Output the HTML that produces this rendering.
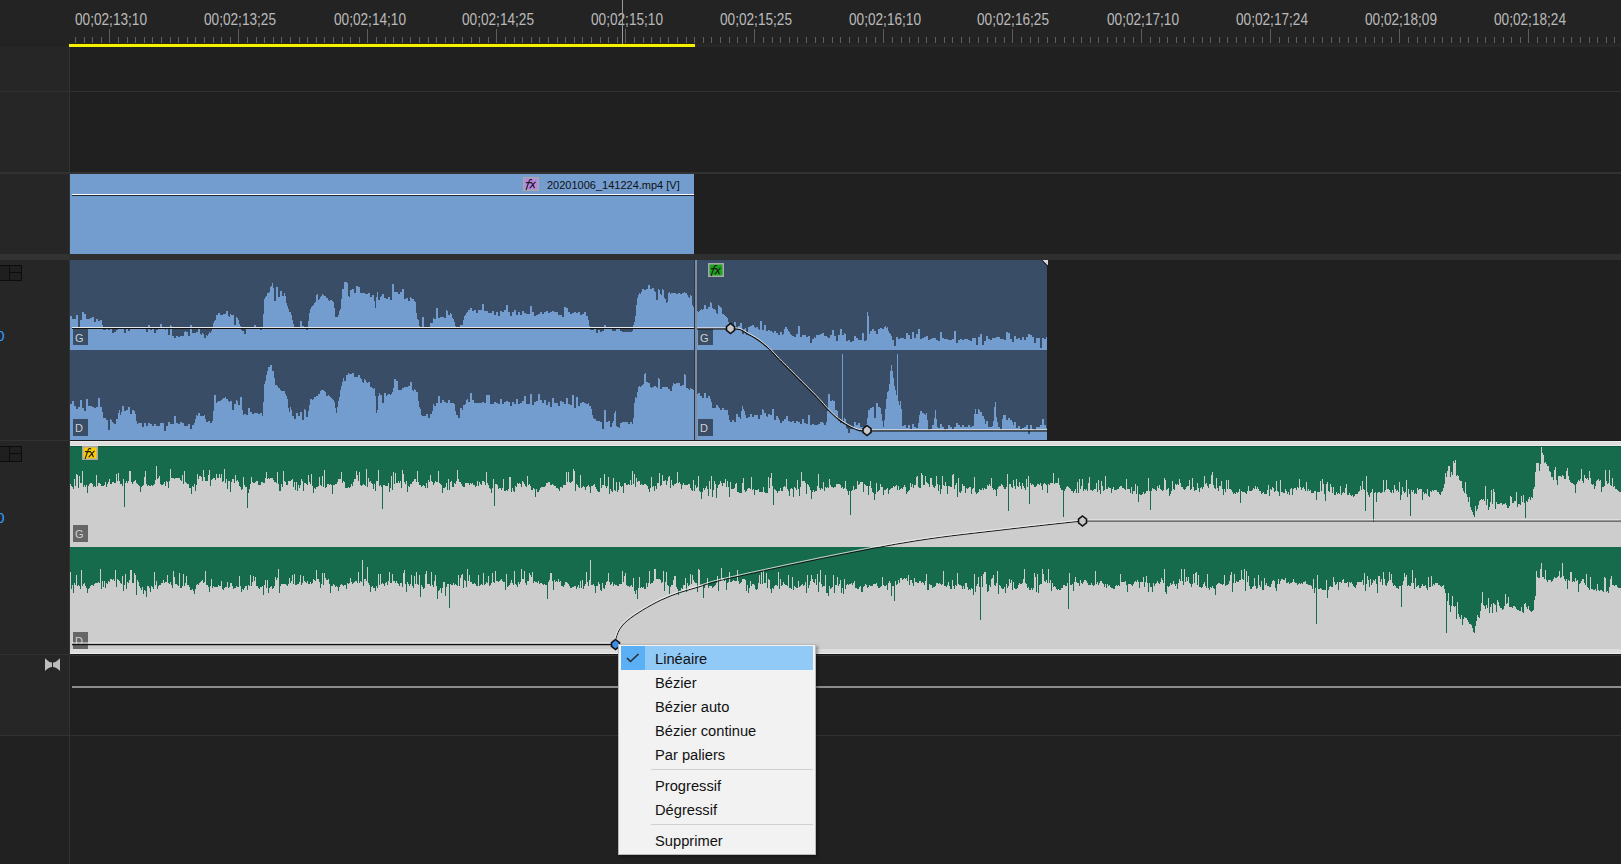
<!DOCTYPE html>
<html><head><meta charset="utf-8"><style>
html,body{margin:0;padding:0;width:1621px;height:864px;overflow:hidden;background:#202020}
body div,body span,body svg{position:absolute}
body *{font-family:"Liberation Sans",sans-serif}
.tc{font-size:16.5px;color:#bababa;white-space:nowrap;line-height:16px;transform:scaleX(0.826);transform-origin:0 0}
.clipname{font-size:11px;color:#111;white-space:nowrap;line-height:13px}
.fx{width:14px;height:13px;border:1px solid #9a9a9a;font-style:italic;font-size:12px;line-height:13px;text-align:center;color:#222}
.lab{font-size:11px;color:#d0d0d0;line-height:17px;padding:1px 0 0 2px;box-sizing:border-box}
.zero{font-size:15.5px;color:#3399ff;line-height:16px}
.mi{font-size:14.7px;color:#111;white-space:nowrap;line-height:17px}
</style></head><body>
<div style="left:0px;top:0px;width:1621px;height:47px;background:#232323;"></div><div style="left:0px;top:47px;width:69px;height:688px;background:#262626;"></div><div style="left:70px;top:47px;width:1551px;height:688px;background:#202020;"></div><div style="left:0px;top:736px;width:1621px;height:128px;background:#212121;"></div><div style="left:69px;top:47px;width:1px;height:817px;background:#323232;"></div><div style="left:0px;top:91px;width:1621px;height:1px;background:#323232;"></div><div style="left:0px;top:172px;width:1621px;height:1px;background:#323232;"></div><div style="left:0px;top:173px;width:1621px;height:1px;background:#323232;"></div><div style="left:0px;top:440px;width:1621px;height:1px;background:#323232;"></div><div style="left:0px;top:654px;width:1621px;height:1px;background:#323232;"></div><div style="left:0px;top:735px;width:1621px;height:1px;background:#323232;"></div><div style="left:0px;top:254px;width:69px;height:6px;background:#333333;"></div><div style="left:69px;top:254px;width:1552px;height:6px;background:#2f2f2f;"></div><svg width="1621" height="47" style="position:absolute;left:0;top:0"><path d="M75.5 37V43 M84.5 37V43 M92.5 37V43 M101.5 37V43 M109.5 29V43 M118.5 37V43 M127.5 37V43 M135.5 37V43 M144.5 37V43 M152.5 37V43 M161.5 37V43 M170.5 37V43 M178.5 37V43 M187.5 37V43 M195.5 37V43 M204.5 37V43 M213.5 37V43 M221.5 37V43 M230.5 37V43 M238.5 29V43 M247.5 37V43 M256.5 37V43 M264.5 37V43 M273.5 37V43 M281.5 37V43 M290.5 37V43 M299.5 37V43 M307.5 37V43 M316.5 37V43 M324.5 37V43 M333.5 37V43 M342.5 37V43 M350.5 37V43 M359.5 37V43 M367.5 29V43 M376.5 37V43 M385.5 37V43 M393.5 37V43 M402.5 37V43 M410.5 37V43 M419.5 37V43 M428.5 37V43 M436.5 37V43 M445.5 37V43 M453.5 37V43 M462.5 37V43 M471.5 37V43 M479.5 37V43 M488.5 37V43 M496.5 29V43 M505.5 37V43 M514.5 37V43 M522.5 37V43 M531.5 37V43 M539.5 37V43 M548.5 37V43 M557.5 37V43 M565.5 37V43 M574.5 37V43 M582.5 37V43 M591.5 37V43 M600.5 37V43 M608.5 37V43 M617.5 37V43 M625.5 29V43 M634.5 37V43 M643.5 37V43 M651.5 37V43 M660.5 37V43 M668.5 37V43 M677.5 37V43 M686.5 37V43 M694.5 37V43 M703.5 37V43 M711.5 37V43 M720.5 37V43 M729.5 37V43 M737.5 37V43 M746.5 37V43 M754.5 29V43 M763.5 37V43 M772.5 37V43 M780.5 37V43 M789.5 37V43 M797.5 37V43 M806.5 37V43 M815.5 37V43 M823.5 37V43 M832.5 37V43 M840.5 37V43 M849.5 37V43 M858.5 37V43 M866.5 37V43 M875.5 37V43 M883.5 29V43 M892.5 37V43 M901.5 37V43 M909.5 37V43 M918.5 37V43 M926.5 37V43 M935.5 37V43 M944.5 37V43 M952.5 37V43 M961.5 37V43 M969.5 37V43 M978.5 37V43 M987.5 37V43 M995.5 37V43 M1004.5 37V43 M1012.5 29V43 M1021.5 37V43 M1030.5 37V43 M1038.5 37V43 M1047.5 37V43 M1055.5 37V43 M1064.5 37V43 M1073.5 37V43 M1081.5 37V43 M1090.5 37V43 M1098.5 37V43 M1107.5 37V43 M1116.5 37V43 M1124.5 37V43 M1133.5 37V43 M1141.5 29V43 M1150.5 37V43 M1159.5 37V43 M1167.5 37V43 M1176.5 37V43 M1184.5 37V43 M1193.5 37V43 M1202.5 37V43 M1210.5 37V43 M1219.5 37V43 M1227.5 37V43 M1236.5 37V43 M1245.5 37V43 M1253.5 37V43 M1262.5 37V43 M1270.5 29V43 M1279.5 37V43 M1288.5 37V43 M1296.5 37V43 M1305.5 37V43 M1313.5 37V43 M1322.5 37V43 M1331.5 37V43 M1339.5 37V43 M1348.5 37V43 M1356.5 37V43 M1365.5 37V43 M1374.5 37V43 M1382.5 37V43 M1391.5 37V43 M1399.5 29V43 M1408.5 37V43 M1417.5 37V43 M1425.5 37V43 M1434.5 37V43 M1442.5 37V43 M1451.5 37V43 M1460.5 37V43 M1468.5 37V43 M1477.5 37V43 M1485.5 37V43 M1494.5 37V43 M1503.5 37V43 M1511.5 37V43 M1520.5 37V43 M1528.5 29V43 M1537.5 37V43 M1546.5 37V43 M1554.5 37V43 M1563.5 37V43 M1571.5 37V43 M1580.5 37V43 M1589.5 37V43 M1597.5 37V43 M1606.5 37V43 M1614.5 37V43" stroke="#5e5e5e" stroke-width="1"/></svg><span class="tc" style="left:75px;top:11px">00;02;13;10</span><span class="tc" style="left:204px;top:11px">00;02;13;25</span><span class="tc" style="left:334px;top:11px">00;02;14;10</span><span class="tc" style="left:462px;top:11px">00;02;14;25</span><span class="tc" style="left:591px;top:11px">00;02;15;10</span><span class="tc" style="left:720px;top:11px">00;02;15;25</span><span class="tc" style="left:849px;top:11px">00;02;16;10</span><span class="tc" style="left:977px;top:11px">00;02;16;25</span><span class="tc" style="left:1107px;top:11px">00;02;17;10</span><span class="tc" style="left:1236px;top:11px">00;02;17;24</span><span class="tc" style="left:1365px;top:11px">00;02;18;09</span><span class="tc" style="left:1494px;top:11px">00;02;18;24</span><div style="left:69px;top:43px;width:626px;height:1px;background:#2a2a10;"></div><div style="left:69px;top:44px;width:626px;height:3px;background:#f5f000;"></div><div style="left:695px;top:44px;width:926px;height:3px;background:#272727;"></div><div style="left:622px;top:0px;width:1px;height:44px;background:#9a9a9a;"></div><div style="left:70px;top:174px;width:624px;height:80px;background:#739ccf;"></div><div style="left:72px;top:194px;width:622px;height:1px;background:#ffffff;"></div><div style="left:72px;top:195px;width:622px;height:1px;background:#1a2a3a;"></div><svg width="16" height="14" style="position:absolute;left:523px;top:177px"><rect x="0.75" y="0.75" width="14.5" height="12.5" fill="#b585e2" stroke="#a8a8a8" stroke-width="1.5"/><path d="M8.8 2.8Q6.6 2.2 6.1 4.2L3.2 12.6M3.4 5.6H8.4M7 10.9L12.2 5.2M8.6 5.9Q10.2 8 11.3 10.8" stroke="#1a1a1a" stroke-width="1.1" fill="none" stroke-linecap="round"/></svg><span class="clipname" style="left:547px;top:179px">20201006_141224.mp4 [V]</span><div style="left:70px;top:260px;width:977px;height:180px;background:#394d66;"></div><div style="left:70px;top:440px;width:1551px;height:1px;background:#1a1a1a;"></div><div style="left:70px;top:441px;width:1551px;height:213px;background:#dddddd;"></div><div style="left:70px;top:441px;width:1551px;height:1px;background:#ebebeb;"></div><div style="left:70px;top:445px;width:1551px;height:1px;background:#e8e6e6;"></div><div style="left:70px;top:653px;width:1551px;height:1px;background:#ececec;"></div><div style="left:70px;top:654px;width:1551px;height:1px;background:#1a1a1a;"></div><div style="left:70px;top:655px;width:1551px;height:1px;background:#333333;"></div><div style="left:70px;top:446px;width:1551px;height:203px;background:#176b4d;"></div><div style="left:70px;top:446px;width:1551px;height:1px;background:#0f5a3c;"></div><svg width="1621" height="864" style="position:absolute;left:0;top:0"><path d="M70 350V316H71V316H72V319H73V319H74V319H75V319H76V315H77V315H78V329H79V329H80V320H81V320H82V312H83V312H84V314H85V314H86V319H87V319H88V319H89V319H90V318H91V318H92V317H93V317H94V322H95V322H96V319H97V319H98V321H99V321H100V320H101V320H102V325H103V330H104V330H105V330H106V329H107V329H108V330H109V330H110V328H111V328H112V333H113V333H114V332H115V332H116V330H117V330H118V329H119V329H120V329H121V328H122V329H123V329H124V333H125V333H126V327H127V327H128V331H129V331H130V329H131V329H132V328H133V328H134V328H135V328H136V328H137V328H138V327H139V327H140V329H141V329H142V329H143V329H144V328H145V328H146V332H147V332H148V325H149V325H150V330H151V330H152V329H153V329H154V333H155V333H156V330H157V330H158V328H159V328H160V324H161V324H162V329H163V329H164V329H165V330H166V329H167V329H168V335H169V335H170V325H171V326H172V336H173V336H174V338H175V338H176V336H177V336H178V337H179V337H180V336H181V336H182V336H183V336H184V332H185V331H186V332H187V332H188V336H189V336H190V325H191V325H192V333H193V333H194V333H195V333H196V332H197V332H198V329H199V329H200V334H201V335H202V333H203V334H204V338H205V338H206V335H207V336H208V334H209V332H210V333H211V331H212V328H213V323H214V321H215V320H216V315H217V315H218V313H219V313H220V315H221V315H222V315H223V314H224V314H225V314H226V311H227V311H228V316H229V317H230V314H231V315H232V315H233V315H234V325H235V325H236V317H237V318H238V320H239V324H240V326H241V330H242V331H243V331H244V334H245V334H246V329H247V329H248V328H249V328H250V327H251V327H252V327H253V327H254V325H255V325H256V328H257V328H258V328H259V328H260V330H261V330H262V328H263V314H264V299H265V297H266V296H267V293H268V293H269V292H270V287H271V286H272V283H273V288H274V301H275V301H276V287H277V287H278V297H279V297H280V291H281V291H282V296H283V296H284V293H285V296H286V303H287V306H288V309H289V312H290V312H291V315H292V320H293V324H294V327H295V329H296V327H297V327H298V329H299V329H300V321H301V321H302V326H303V326H304V328H305V328H306V330H307V330H308V321H309V313H310V309H311V307H312V306H313V305H314V303H315V302H316V295H317V294H318V300H319V299H320V297H321V296H322V294H323V295H324V296H325V296H326V298H327V298H328V300H329V301H330V300H331V300H332V301H333V302H334V308H335V317H336V317H337V317H338V315H339V311H340V309H341V299H342V289H343V289H344V282H345V282H346V282H347V283H348V296H349V297H350V290H351V290H352V289H353V289H354V293H355V293H356V286H357V286H358V287H359V287H360V293H361V293H362V293H363V293H364V293H365V294H366V294H367V294H368V293H369V293H370V297H371V297H372V295H373V295H374V301H375V308H376V297H377V292H378V300H379V300H380V297H381V296H382V294H383V294H384V298H385V298H386V299H387V299H388V297H389V297H390V300H391V300H392V284H393V284H394V292H395V292H396V292H397V292H398V294H399V294H400V292H401V292H402V289H403V289H404V299H405V299H406V298H407V298H408V301H409V301H410V297H411V298H412V299H413V299H414V301H415V302H416V313H417V319H418V320H419V326H420V327H421V328H422V317H423V317H424V328H425V328H426V327H427V327H428V327H429V327H430V323H431V323H432V323H433V318H434V319H435V319H436V308H437V308H438V318H439V318H440V317H441V317H442V317H443V317H444V318H445V318H446V310H447V311H448V315H449V315H450V313H451V314H452V318H453V319H454V322H455V326H456V328H457V328H458V328H459V328H460V325H461V325H462V325H463V320H464V316H465V315H466V313H467V312H468V310H469V310H470V308H471V308H472V311H473V311H474V310H475V310H476V313H477V313H478V310H479V310H480V310H481V310H482V304H483V304H484V311H485V311H486V311H487V311H488V313H489V313H490V313H491V313H492V311H493V311H494V315H495V315H496V312H497V312H498V316H499V316H500V311H501V311H502V312H503V312H504V310H505V310H506V305H507V305H508V312H509V312H510V316H511V316H512V312H513V312H514V310H515V310H516V315H517V315H518V312H519V312H520V315H521V315H522V311H523V311H524V313H525V313H526V314H527V314H528V314H529V314H530V306H531V306H532V312H533V312H534V316H535V316H536V315H537V315H538V314H539V314H540V312H541V312H542V314H543V314H544V312H545V312H546V311H547V311H548V313H549V313H550V312H551V312H552V311H553V311H554V312H555V312H556V312H557V312H558V315H559V315H560V315H561V315H562V317H563V317H564V307H565V307H566V308H567V308H568V312H569V312H570V314H571V314H572V313H573V313H574V312H575V312H576V313H577V313H578V312H579V312H580V315H581V315H582V314H583V314H584V312H585V312H586V316H587V316H588V320H589V326H590V330H591V330H592V330H593V330H594V329H595V329H596V333H597V333H598V330H599V330H600V332H601V332H602V331H603V331H604V325H605V325H606V328H607V328H608V329H609V329H610V329H611V329H612V331H613V331H614V331H615V331H616V329H617V329H618V329H619V329H620V331H621V331H622V332H623V332H624V332H625V332H626V332H627V332H628V332H629V332H630V332H631V332H632V331H633V325H634V322H635V316H636V305H637V298H638V295H639V293H640V294H641V292H642V289H643V289H644V290H645V290H646V289H647V289H648V285H649V285H650V289H651V289H652V288H653V288H654V291H655V292H656V300H657V300H658V289H659V290H660V294H661V295H662V289H663V290H664V298H665V299H666V303H667V302H668V293H669V292H670V294H671V293H672V293H673V293H674V293H675V293H676V294H677V294H678V293H679V293H680V294H681V294H682V293H683V293H684V292H685V293H686V293H687V295H688V297H689V298H690V295H691V296H692V305H693V307H694V304H695V307H696V312H697V311H698V312H699V311H700V310H701V309H702V310H703V309H704V305H705V305H706V309H707V309H708V307H709V307H710V302H711V303H712V308H713V309H714V309H715V310H716V313H717V314H718V305H719V306H720V307H721V308H722V314H723V314H724V315H725V316H726V317H727V318H728V322H729V327H730V327H731V327H732V330H733V330H734V322H735V322H736V328H737V328H738V326H739V326H740V323H741V323H742V334H743V334H744V329H745V328H746V335H747V334H748V327H749V327H750V326H751V326H752V325H753V325H754V327H755V328H756V327H757V327H758V329H759V330H760V321H761V321H762V330H763V330H764V325H765V325H766V331H767V331H768V330H769V330H770V331H771V331H772V332H773V333H774V331H775V331H776V333H777V333H778V335H779V335H780V332H781V332H782V335H783V334H784V329H785V327H786V327H787V329H788V331H789V332H790V334H791V335H792V336H793V336H794V337H795V337H796V334H797V334H798V326H799V326H800V337H801V337H802V335H803V335H804V335H805V335H806V337H807V337H808V336H809V336H810V343H811V343H812V339H813V339H814V337H815V338H816V335H817V335H818V335H819V335H820V334H821V334H822V333H823V333H824V336H825V336H826V336H827V337H828V338H829V338H830V335H831V335H832V330H833V330H834V336H835V336H836V341H837V341H838V335H839V335H840V329H841V329H842V335H843V335H844V333H845V334H846V341H847V341H848V340H849V340H850V342H851V342H852V341H853V341H854V336H855V336H856V338H857V338H858V340H859V340H860V340H861V340H862V333H863V333H864V341H865V341H866V340H867V312H868V316H869V334H870V331H871V331H872V329H873V329H874V331H875V331H876V334H877V334H878V329H879V329H880V328H881V328H882V329H883V329H884V327H885V326H886V328H887V327H888V331H889V333H890V334H891V336H892V340H893V340H894V346H895V346H896V337H897V337H898V339H899V339H900V338H901V338H902V338H903V338H904V339H905V339H906V333H907V333H908V335H909V335H910V339H911V339H912V332H913V332H914V338H915V338H916V334H917V334H918V329H919V329H920V339H921V339H922V338H923V338H924V337H925V337H926V336H927V336H928V340H929V340H930V339H931V339H932V338H933V338H934V338H935V338H936V340H937V340H938V341H939V341H940V332H941V332H942V338H943V338H944V339H945V339H946V339H947V339H948V340H949V340H950V340H951V340H952V339H953V339H954V331H955V331H956V343H957V343H958V340H959V340H960V339H961V339H962V340H963V340H964V339H965V339H966V339H967V339H968V340H969V340H970V341H971V341H972V338H973V338H974V338H975V338H976V345H977V345H978V337H979V337H980V334H981V334H982V345H983V345H984V341H985V341H986V336H987V336H988V339H989V339H990V340H991V340H992V338H993V338H994V338H995V338H996V337H997V337H998V337H999V337H1000V339H1001V339H1002V339H1003V339H1004V340H1005V340H1006V332H1007V332H1008V333H1009V333H1010V339H1011V339H1012V342H1013V342H1014V336H1015V336H1016V339H1017V339H1018V338H1019V338H1020V340H1021V340H1022V337H1023V337H1024V340H1025V340H1026V337H1027V337H1028V334H1029V334H1030V335H1031V335H1032V337H1033V337H1034V343H1035V343H1036V338H1037V338H1038V338H1039V338H1040V348H1041V348H1042V338H1043V338H1044V339H1045V339H1046V337H1047V350Z" fill="#739ccf"/><path d="M70 440V404H71V404H72V401H73V401H74V406H75V406H76V409H77V409H78V407H79V407H80V400H81V400H82V408H83V408H84V411H85V411H86V399H87V399H88V406H89V406H90V406H91V406H92V407H93V407H94V408H95V408H96V407H97V407H98V398H99V398H100V407H101V407H102V412H103V418H104V418H105V418H106V420H107V420H108V430H109V430H110V419H111V420H112V422H113V423H114V424H115V424H116V419H117V419H118V413H119V410H120V415H121V412H122V406H123V406H124V411H125V411H126V410H127V410H128V407H129V407H130V414H131V414H132V410H133V410H134V411H135V414H136V421H137V424H138V423H139V423H140V423H141V423H142V427H143V427H144V423H145V423H146V426H147V426H148V423H149V423H150V424H151V424H152V426H153V426H154V424H155V424H156V426H157V426H158V426H159V426H160V423H161V423H162V423H163V423H164V431H165V431H166V426H167V426H168V422H169V422H170V424H171V424H172V424H173V424H174V416H175V416H176V423H177V423H178V424H179V424H180V422H181V422H182V423H183V423H184V426H185V426H186V426H187V426H188V424H189V424H190V429H191V429H192V425H193V425H194V423H195V419H196V415H197V416H198V413H199V413H200V416H201V416H202V416H203V416H204V415H205V419H206V422H207V422H208V421H209V421H210V423H211V423H212V421H213V411H214V395H215V395H216V403H217V402H218V401H219V401H220V401H221V400H222V399H223V398H224V398H225V397H226V399H227V399H228V401H229V402H230V401H231V401H232V410H233V410H234V404H235V404H236V400H237V401H238V405H239V405H240V397H241V397H242V410H243V415H244V414H245V414H246V415H247V415H248V408H249V408H250V412H251V412H252V414H253V414H254V413H255V413H256V413H257V413H258V414H259V414H260V413H261V413H262V416H263V402H264V384H265V381H266V375H267V371H268V367H269V367H270V365H271V365H272V371H273V371H274V378H275V385H276V385H277V386H278V388H279V388H280V390H281V391H282V391H283V391H284V391H285V394H286V396H287V399H288V408H289V412H290V407H291V410H292V416H293V416H294V419H295V419H296V413H297V413H298V416H299V416H300V412H301V412H302V420H303V420H304V409H305V410H306V417H307V417H308V411H309V405H310V399H311V399H312V400H313V399H314V397H315V397H316V396H317V396H318V394H319V394H320V391H321V390H322V390H323V390H324V391H325V392H326V396H327V396H328V395H329V396H330V397H331V398H332V399H333V400H334V402H335V408H336V413H337V407H338V401H339V397H340V390H341V386H342V382H343V378H344V381H345V381H346V375H347V375H348V373H349V374H350V374H351V374H352V373H353V373H354V377H355V377H356V377H357V377H358V375H359V375H360V378H361V379H362V382H363V383H364V379H365V380H366V382H367V383H368V382H369V382H370V387H371V387H372V388H373V389H374V388H375V396H376V413H377V410H378V396H379V393H380V395H381V395H382V403H383V403H384V393H385V393H386V396H387V395H388V394H389V394H390V395H391V394H392V392H393V388H394V379H395V379H396V381H397V381H398V390H399V390H400V390H401V390H402V388H403V388H404V387H405V387H406V387H407V387H408V386H409V386H410V382H411V382H412V390H413V391H414V389H415V390H416V392H417V392H418V401H419V407H420V409H421V415H422V416H423V416H424V416H425V416H426V414H427V414H428V418H429V418H430V414H431V414H432V411H433V404H434V406H435V406H436V403H437V403H438V396H439V396H440V403H441V403H442V400H443V400H444V402H445V402H446V403H447V403H448V400H449V400H450V403H451V403H452V403H453V403H454V404H455V411H456V415H457V415H458V418H459V418H460V408H461V408H462V410H463V405H464V405H465V404H466V400H467V399H468V402H469V402H470V393H471V393H472V400H473V400H474V403H475V403H476V403H477V403H478V403H479V403H480V403H481V403H482V402H483V402H484V403H485V403H486V395H487V395H488V395H489V395H490V404H491V404H492V404H493V404H494V402H495V402H496V403H497V403H498V404H499V404H500V399H501V399H502V404H503V404H504V402H505V402H506V401H507V401H508V402H509V402H510V406H511V406H512V402H513V402H514V404H515V404H516V399H517V399H518V404H519V404H520V403H521V403H522V401H523V401H524V396H525V396H526V404H527V404H528V404H529V404H530V394H531V394H532V405H533V405H534V402H535V402H536V401H537V401H538V394H539V394H540V400H541V400H542V403H543V403H544V400H545V400H546V405H547V405H548V402H549V402H550V407H551V407H552V398H553V398H554V403H555V403H556V403H557V403H558V406H559V406H560V401H561V401H562V402H563V402H564V404H565V404H566V398H567V398H568V404H569V404H570V405H571V405H572V395H573V395H574V408H575V408H576V397H577V397H578V406H579V406H580V403H581V403H582V402H583V402H584V403H585V403H586V404H587V404H588V403H589V406H590V406H591V409H592V415H593V418H594V419H595V419H596V421H597V421H598V421H599V421H600V422H601V422H602V429H603V429H604V410H605V410H606V422H607V422H608V421H609V421H610V427H611V427H612V423H613V421H614V413H615V411H616V426H617V427H618V427H619V428H620V423H621V423H622V422H623V422H624V422H625V422H626V422H627V422H628V424H629V424H630V422H631V422H632V424H633V418H634V403H635V397H636V398H637V392H638V387H639V386H640V387H641V386H642V385H643V384H644V374H645V373H646V382H647V382H648V383H649V383H650V387H651V388H652V387H653V387H654V386H655V386H656V387H657V388H658V378H659V379H660V389H661V389H662V387H663V387H664V387H665V387H666V387H667V387H668V389H669V389H670V391H671V391H672V386H673V383H674V384H675V384H676V383H677V383H678V383H679V383H680V386H681V386H682V385H683V385H684V374H685V375H686V388H687V388H688V389H689V390H690V388H691V389H692V389H693V390H694V391H695V393H696V393H697V394H698V393H699V393H700V396H701V396H702V398H703V398H704V393H705V393H706V398H707V398H708V396H709V396H710V399H711V402H712V408H713V408H714V408H715V408H716V405H717V405H718V407H719V408H720V410H721V410H722V408H723V408H724V410H725V410H726V410H727V410H728V415H729V420H730V422H731V422H732V420H733V420H734V422H735V422H736V414H737V414H738V417H739V417H740V419H741V411H742V406H743V409H744V411H745V415H746V418H747V418H748V417H749V417H750V414H751V414H752V417H753V417H754V415H755V415H756V415H757V415H758V419H759V419H760V415H761V415H762V409H763V410H764V413H765V413H766V416H767V417H768V414H769V414H770V415H771V415H772V409H773V409H774V420H775V420H776V416H777V416H778V418H779V420H780V423H781V423H782V421H783V421H784V419H785V419H786V416H787V416H788V421H789V421H790V422H791V422H792V421H793V421H794V423H795V423H796V421H797V421H798V422H799V422H800V424H801V424H802V419H803V419H804V423H805V423H806V424H807V424H808V415H809V415H810V425H811V425H812V424H813V424H814V425H815V425H816V425H817V425H818V424H819V424H820V422H821V422H822V422H823V423H824V425H825V425H826V422H827V411H828V394H829V394H830V401H831V401H832V400H833V401H834V401H835V410H836V410H837V411H838V421H839V421H840V423H841V423H842V354H843V424H844V418H845V419H846V428H847V429H848V433H849V433H850V429H851V429H852V429H853V429H854V422H855V422H856V425H857V425H858V423H859V423H860V427H861V427H862V427H863V427H864V434H865V434H866V424H867V418H868V410H869V410H870V408H871V408H872V407H873V407H874V418H875V418H876V403H877V403H878V407H879V407H880V408H881V414H882V421H883V427H884V420H885V409H886V399H887V392H888V391H889V384H890V371H891V365H892V371H893V378H894V386H895V390H896V395H897V354H898V401H899V405H900V401H901V409H902V426H903V426H904V425H905V425H906V428H907V428H908V425H909V425H910V429H911V429H912V424H913V424H914V427H915V427H916V428H917V428H918V423H919V415H920V411H921V411H922V413H923V413H924V414H925V415H926V413H927V420H928V430H929V430H930V429H931V429H932V425H933V425H934V418H935V410H936V419H937V427H938V428H939V428H940V424H941V424H942V427H943V427H944V430H945V430H946V429H947V429H948V425H949V425H950V427H951V427H952V429H953V429H954V427H955V427H956V423H957V423H958V425H959V425H960V427H961V427H962V425H963V425H964V427H965V427H966V427H967V427H968V425H969V425H970V427H971V427H972V426H973V426H974V414H975V409H976V414H977V414H978V409H979V410H980V412H981V412H982V416H983V416H984V419H985V424H986V421H987V421H988V427H989V427H990V427H991V427H992V426H993V421H994V407H995V402H996V417H997V422H998V427H999V427H1000V429H1001V429H1002V419H1003V415H1004V415H1005V415H1006V420H1007V420H1008V418H1009V418H1010V420H1011V420H1012V422H1013V425H1014V422H1015V422H1016V428H1017V428H1018V426H1019V426H1020V429H1021V429H1022V428H1023V428H1024V427H1025V427H1026V425H1027V425H1028V434H1029V434H1030V425H1031V425H1032V429H1033V429H1034V430H1035V430H1036V427H1037V427H1038V427H1039V427H1040V425H1041V425H1042V419H1043V419H1044V425H1045V425H1046V428H1047V440Z" fill="#739ccf"/><rect x="694" y="260" width="1" height="180" fill="#2a3545"/><rect x="695" y="260" width="2" height="180" fill="#7f8ea2"/><path d="M70 547V484H71V486H72V487H73V489H74V479H75V486H76V474H77V475H78V488H79V476H80V483H81V483H82V471H83V487H84V485H85V487H86V485H87V493H88V486H89V484H90V483H91V483H92V484H93V487H94V486H95V487H96V475H97V486H98V483H99V483H100V484H101V486H102V486H103V486H104V485H105V482H106V487H107V484H108V482H109V479H110V484H111V484H112V482H113V482H114V483H115V483H116V474H117V481H118V473H119V481H120V484H121V484H122V486H123V479H124V507H125V483H126V481H127V483H128V481H129V471H130V471H131V482H132V484H133V482H134V481H135V480H136V483H137V484H138V485H139V486H140V492H141V487H142V486H143V485H144V477H145V471H146V484H147V486H148V485H149V486H150V486H151V485H152V486H153V485H154V484H155V480H156V466H157V479H158V478H159V476H160V484H161V485H162V485H163V484H164V482H165V486H166V481H167V482H168V488H169V481H170V469H171V478H172V478H173V478H174V479H175V478H176V478H177V478H178V478H179V478H180V480H181V481H182V475H183V484H184V471H185V482H186V483H187V484H188V484H189V488H190V488H191V494H192V486H193V487H194V484H195V491H196V485H197V474H198V479H199V476H200V476H201V477H202V481H203V470H204V477H205V481H206V481H207V481H208V475H209V470H210V486H211V480H212V479H213V478H214V478H215V480H216V474H217V478H218V478H219V474H220V478H221V474H222V482H223V481H224V469H225V483H226V479H227V489H228V481H229V481H230V492H231V482H232V479H233V479H234V483H235V475H236V481H237V480H238V482H239V486H240V487H241V490H242V489H243V477H244V485H245V487H246V487H247V508H248V493H249V489H250V484H251V477H252V482H253V483H254V483H255V482H256V481H257V481H258V485H259V485H260V485H261V482H262V482H263V483H264V483H265V478H266V472H267V479H268V478H269V479H270V478H271V478H272V478H273V480H274V482H275V482H276V483H277V472H278V484H279V491H280V491H281V484H282V487H283V471H284V481H285V482H286V485H287V485H288V481H289V481H290V481H291V480H292V479H293V487H294V482H295V490H296V482H297V491H298V485H299V488H300V485H301V479H302V481H303V491H304V483H305V483H306V484H307V485H308V475H309V482H310V484H311V474H312V486H313V493H314V488H315V489H316V487H317V487H318V486H319V477H320V485H321V486H322V476H323V487H324V470H325V488H326V487H327V484H328V484H329V485H330V484H331V485H332V494H333V485H334V485H335V484H336V484H337V482H338V479H339V479H340V479H341V472H342V483H343V481H344V482H345V488H346V488H347V488H348V487H349V488H350V487H351V484H352V486H353V482H354V479H355V479H356V471H357V475H358V481H359V472H360V485H361V486H362V485H363V484H364V485H365V486H366V469H367V487H368V478H369V482H370V481H371V483H372V484H373V489H374V484H375V491H376V481H377V481H378V470H379V486H380V485H381V487H382V509H383V485H384V485H385V486H386V486H387V486H388V483H389V492H390V488H391V476H392V490H393V472H394V484H395V473H396V483H397V483H398V481H399V483H400V481H401V488H402V470H403V474H404V482H405V484H406V481H407V492H408V486H409V487H410V484H411V484H412V482H413V481H414V479H415V479H416V482H417V471H418V482H419V485H420V485H421V487H422V486H423V485H424V486H425V488H426V483H427V488H428V480H429V482H430V475H431V481H432V482H433V485H434V483H435V481H436V482H437V482H438V471H439V483H440V484H441V485H442V493H443V488H444V488H445V487H446V483H447V490H448V479H449V490H450V482H451V481H452V487H453V487H454V483H455V484H456V481H457V470H458V479H459V482H460V482H461V484H462V486H463V487H464V487H465V483H466V483H467V483H468V483H469V485H470V483H471V484H472V483H473V485H474V485H475V487H476V486H477V481H478V486H479V482H480V484H481V485H482V481H483V481H484V482H485V485H486V472H487V483H488V485H489V488H490V489H491V493H492V488H493V479H494V506H495V484H496V484H497V485H498V489H499V488H500V488H501V490H502V488H503V479H504V491H505V491H506V490H507V491H508V489H509V477H510V477H511V492H512V488H513V491H514V492H515V486H516V487H517V483H518V484H519V483H520V484H521V487H522V481H523V482H524V484H525V486H526V487H527V476H528V485H529V484H530V486H531V490H532V490H533V488H534V489H535V497H536V489H537V492H538V492H539V490H540V488H541V487H542V487H543V487H544V487H545V486H546V483H547V483H548V482H549V482H550V485H551V485H552V484H553V485H554V486H555V486H556V488H557V488H558V489H559V491H560V487H561V487H562V488H563V485H564V485H565V485H566V472H567V482H568V472H569V482H570V483H571V482H572V481H573V469H574V471H575V491H576V484H577V485H578V487H579V488H580V475H581V488H582V487H583V486H584V487H585V490H586V487H587V486H588V485H589V487H590V493H591V486H592V486H593V485H594V484H595V487H596V489H597V491H598V492H599V492H600V478H601V488H602V485H603V485H604V474H605V486H606V488H607V486H608V477H609V494H610V489H611V491H612V492H613V478H614V490H615V491H616V482H617V492H618V490H619V482H620V486H621V487H622V486H623V493H624V483H625V483H626V485H627V485H628V484H629V485H630V480H631V485H632V471H633V484H634V474H635V487H636V478H637V482H638V481H639V481H640V485H641V484H642V485H643V485H644V484H645V484H646V485H647V486H648V489H649V492H650V488H651V477H652V487H653V486H654V491H655V486H656V489H657V483H658V483H659V473H660V486H661V485H662V475H663V481H664V481H665V480H666V485H667V481H668V477H669V476H670V488H671V480H672V485H673V486H674V484H675V484H676V483H677V472H678V483H679V482H680V484H681V489H682V485H683V483H684V485H685V485H686V485H687V485H688V484H689V484H690V488H691V490H692V491H693V480H694V491H695V485H696V488H697V487H698V476H699V491H700V492H701V499H702V492H703V488H704V490H705V488H706V486H707V489H708V496H709V481H710V489H711V476H712V497H713V490H714V481H715V484H716V498H717V488H718V485H719V484H720V481H721V483H722V486H723V483H724V483H725V479H726V487H727V481H728V487H729V497H730V482H731V489H732V489H733V489H734V488H735V484H736V483H737V492H738V492H739V493H740V493H741V493H742V483H743V478H744V490H745V492H746V491H747V489H748V488H749V488H750V489H751V477H752V490H753V489H754V495H755V490H756V490H757V490H758V489H759V492H760V492H761V492H762V492H763V487H764V492H765V493H766V493H767V493H768V477H769V488H770V478H771V473H772V486H773V505H774V489H775V490H776V491H777V493H778V491H779V491H780V488H781V491H782V491H783V487H784V486H785V487H786V479H787V489H788V491H789V496H790V489H791V488H792V489H793V497H794V487H795V488H796V490H797V480H798V489H799V496H800V487H801V472H802V481H803V481H804V481H805V483H806V494H807V484H808V485H809V487H810V490H811V499H812V492H813V490H814V492H815V491H816V491H817V486H818V474H819V488H820V490H821V488H822V489H823V482H824V491H825V487H826V488H827V487H828V488H829V479H830V485H831V487H832V487H833V488H834V487H835V487H836V484H837V484H838V484H839V484H840V485H841V488H842V487H843V489H844V488H845V481H846V489H847V491H848V495H849V491H850V515H851V491H852V490H853V486H854V490H855V489H856V489H857V481H858V485H859V484H860V482H861V482H862V482H863V492H864V484H865V485H866V486H867V486H868V495H869V486H870V481H871V488H872V492H873V493H874V500H875V494H876V483H877V492H878V491H879V490H880V484H881V487H882V487H883V495H884V490H885V490H886V489H887V488H888V494H889V490H890V489H891V488H892V488H893V486H894V487H895V486H896V485H897V490H898V486H899V490H900V489H901V488H902V489H903V487H904V485H905V487H906V494H907V492H908V491H909V490H910V483H911V487H912V484H913V488H914V485H915V485H916V477H917V476H918V487H919V488H920V488H921V473H922V475H923V485H924V485H925V476H926V482H927V483H928V484H929V487H930V478H931V478H932V485H933V487H934V488H935V486H936V476H937V484H938V491H939V485H940V494H941V489H942V476H943V485H944V486H945V482H946V486H947V494H948V486H949V486H950V487H951V487H952V475H953V474H954V489H955V485H956V483H957V497H958V478H959V492H960V493H961V491H962V484H963V486H964V486H965V493H966V488H967V489H968V488H969V487H970V487H971V494H972V489H973V488H974V477H975V492H976V494H977V493H978V492H979V489H980V490H981V490H982V488H983V490H984V488H985V489H986V489H987V485H988V486H989V484H990V486H991V478H992V488H993V490H994V489H995V490H996V496H997V489H998V487H999V486H1000V486H1001V484H1002V485H1003V487H1004V489H1005V489H1006V487H1007V474H1008V511H1009V484H1010V484H1011V487H1012V488H1013V480H1014V486H1015V489H1016V479H1017V486H1018V487H1019V482H1020V486H1021V489H1022V483H1023V486H1024V488H1025V490H1026V479H1027V487H1028V476H1029V504H1030V483H1031V485H1032V484H1033V485H1034V487H1035V487H1036V486H1037V484H1038V484H1039V485H1040V483H1041V486H1042V490H1043V484H1044V483H1045V484H1046V485H1047V493H1048V484H1049V485H1050V483H1051V483H1052V483H1053V473H1054V484H1055V483H1056V483H1057V483H1058V478H1059V485H1060V488H1061V490H1062V490H1063V517H1064V491H1065V489H1066V487H1067V486H1068V487H1069V488H1070V489H1071V491H1072V491H1073V493H1074V491H1075V489H1076V493H1077V482H1078V493H1079V479H1080V489H1081V486H1082V479H1083V491H1084V489H1085V490H1086V489H1087V491H1088V483H1089V477H1090V490H1091V490H1092V491H1093V490H1094V489H1095V489H1096V483H1097V492H1098V480H1099V490H1100V494H1101V481H1102V486H1103V491H1104V490H1105V476H1106V489H1107V489H1108V487H1109V488H1110V488H1111V493H1112V489H1113V487H1114V490H1115V490H1116V490H1117V489H1118V489H1119V487H1120V486H1121V486H1122V488H1123V488H1124V489H1125V490H1126V479H1127V489H1128V489H1129V489H1130V493H1131V487H1132V494H1133V491H1134V491H1135V484H1136V494H1137V486H1138V502H1139V494H1140V495H1141V495H1142V494H1143V492H1144V494H1145V493H1146V491H1147V491H1148V478H1149V491H1150V510H1151V491H1152V488H1153V489H1154V489H1155V490H1156V491H1157V486H1158V488H1159V485H1160V489H1161V490H1162V491H1163V490H1164V478H1165V480H1166V490H1167V489H1168V488H1169V496H1170V494H1171V491H1172V481H1173V489H1174V490H1175V484H1176V485H1177V484H1178V485H1179V479H1180V483H1181V487H1182V487H1183V489H1184V490H1185V489H1186V487H1187V486H1188V486H1189V480H1190V490H1191V489H1192V478H1193V487H1194V491H1195V490H1196V490H1197V483H1198V488H1199V492H1200V488H1201V487H1202V489H1203V487H1204V476H1205V484H1206V483H1207V486H1208V488H1209V484H1210V484H1211V475H1212V472H1213V485H1214V488H1215V489H1216V478H1217V488H1218V491H1219V486H1220V486H1221V481H1222V489H1223V495H1224V489H1225V492H1226V480H1227V489H1228V480H1229V489H1230V489H1231V490H1232V492H1233V494H1234V493H1235V494H1236V492H1237V493H1238V492H1239V489H1240V503H1241V491H1242V492H1243V492H1244V492H1245V493H1246V494H1247V491H1248V486H1249V491H1250V491H1251V491H1252V490H1253V488H1254V489H1255V486H1256V489H1257V487H1258V489H1259V491H1260V491H1261V494H1262V493H1263V492H1264V494H1265V494H1266V494H1267V490H1268V485H1269V496H1270V489H1271V490H1272V487H1273V488H1274V492H1275V491H1276V481H1277V491H1278V492H1279V496H1280V480H1281V492H1282V492H1283V493H1284V493H1285V489H1286V491H1287V494H1288V492H1289V495H1290V489H1291V488H1292V495H1293V489H1294V488H1295V488H1296V490H1297V487H1298V488H1299V479H1300V487H1301V490H1302V488H1303V487H1304V489H1305V491H1306V482H1307V491H1308V489H1309V491H1310V490H1311V493H1312V493H1313V493H1314V491H1315V491H1316V500H1317V492H1318V492H1319V492H1320V481H1321V491H1322V479H1323V484H1324V494H1325V501H1326V484H1327V482H1328V491H1329V492H1330V484H1331V487H1332V493H1333V487H1334V495H1335V495H1336V492H1337V494H1338V493H1339V494H1340V486H1341V495H1342V493H1343V492H1344V493H1345V488H1346V484H1347V495H1348V495H1349V493H1350V495H1351V496H1352V495H1353V497H1354V496H1355V494H1356V494H1357V494H1358V492H1359V491H1360V486H1361V490H1362V481H1363V489H1364V490H1365V511H1366V476H1367V492H1368V495H1369V497H1370V493H1371V492H1372V489H1373V522H1374V493H1375V492H1376V502H1377V493H1378V492H1379V492H1380V493H1381V493H1382V492H1383V480H1384V492H1385V490H1386V480H1387V489H1388V489H1389V490H1390V492H1391V493H1392V490H1393V493H1394V485H1395V489H1396V491H1397V490H1398V492H1399V482H1400V500H1401V495H1402V487H1403V491H1404V493H1405V492H1406V480H1407V497H1408V489H1409V494H1410V516H1411V490H1412V492H1413V490H1414V494H1415V493H1416V494H1417V488H1418V490H1419V489H1420V489H1421V489H1422V500H1423V492H1424V494H1425V493H1426V494H1427V489H1428V496H1429V497H1430V491H1431V492H1432V490H1433V491H1434V490H1435V490H1436V490H1437V492H1438V492H1439V494H1440V495H1441V492H1442V491H1443V488H1444V484H1445V473H1446V477H1447V471H1448V466H1449V466H1450V477H1451V472H1452V475H1453V461H1454V463H1455V460H1456V476H1457V475H1458V476H1459V480H1460V481H1461V481H1462V488H1463V491H1464V493H1465V482H1466V494H1467V497H1468V502H1469V497H1470V507H1471V510H1472V512H1473V515H1474V517H1475V506H1476V511H1477V509H1478V505H1479V501H1480V500H1481V499H1482V500H1483V499H1484V501H1485V486H1486V505H1487V499H1488V510H1489V507H1490V502H1491V490H1492V504H1493V489H1494V492H1495V509H1496V502H1497V504H1498V504H1499V504H1500V503H1501V503H1502V505H1503V504H1504V504H1505V503H1506V505H1507V508H1508V508H1509V506H1510V496H1511V497H1512V503H1513V503H1514V501H1515V501H1516V492H1517V507H1518V504H1519V504H1520V505H1521V496H1522V502H1523V495H1524V503H1525V518H1526V501H1527V502H1528V499H1529V497H1530V500H1531V497H1532V498H1533V489H1534V487H1535V472H1536V463H1537V463H1538V463H1539V471H1540V464H1541V447H1542V453H1543V455H1544V463H1545V462H1546V464H1547V466H1548V466H1549V471H1550V472H1551V477H1552V477H1553V480H1554V470H1555V467H1556V480H1557V485H1558V476H1559V476H1560V476H1561V477H1562V475H1563V476H1564V479H1565V479H1566V471H1567V468H1568V476H1569V480H1570V482H1571V483H1572V483H1573V484H1574V485H1575V493H1576V484H1577V482H1578V480H1579V481H1580V479H1581V469H1582V481H1583V483H1584V475H1585V478H1586V479H1587V478H1588V480H1589V471H1590V478H1591V484H1592V485H1593V484H1594V489H1595V486H1596V481H1597V480H1598V479H1599V481H1600V480H1601V492H1602V487H1603V487H1604V486H1605V470H1606V481H1607V484H1608V483H1609V470H1610V485H1611V486H1612V478H1613V487H1614V486H1615V489H1616V489H1617V490H1618V491H1619V492H1620V492H1621V547Z" fill="#cdcdcd"/><path d="M70 649V572H71V589H72V585H73V593H74V583H75V585H76V575H77V586H78V585H79V586H80V589H81V570H82V586H83V584H84V583H85V586H86V588H87V593H88V589H89V588H90V586H91V585H92V585H93V586H94V584H95V583H96V583H97V583H98V582H99V583H100V569H101V589H102V581H103V587H104V581H105V588H106V583H107V584H108V581H109V582H110V579H111V579H112V580H113V579H114V581H115V570H116V587H117V579H118V580H119V581H120V583H121V584H122V576H123V591H124V585H125V574H126V589H127V582H128V583H129V580H130V570H131V570H132V583H133V583H134V573H135V575H136V595H137V580H138V582H139V586H140V588H141V590H142V587H143V594H144V590H145V591H146V597H147V586H148V586H149V588H150V592H151V586H152V587H153V589H154V572H155V585H156V581H157V589H158V586H159V585H160V585H161V583H162V583H163V580H164V583H165V582H166V582H167V575H168V583H169V584H170V582H171V585H172V588H173V571H174V577H175V584H176V584H177V585H178V586H179V573H180V588H181V588H182V586H183V574H184V586H185V583H186V576H187V585H188V585H189V587H190V590H191V590H192V589H193V591H194V594H195V589H196V585H197V584H198V585H199V583H200V582H201V581H202V580H203V583H204V582H205V571H206V585H207V585H208V587H209V592H210V586H211V579H212V588H213V586H214V587H215V587H216V587H217V587H218V585H219V586H220V586H221V581H222V589H223V590H224V588H225V587H226V587H227V582H228V588H229V587H230V583H231V583H232V586H233V589H234V588H235V588H236V586H237V587H238V587H239V576H240V586H241V592H242V589H243V590H244V588H245V586H246V586H247V590H248V585H249V586H250V575H251V586H252V582H253V576H254V581H255V577H256V586H257V586H258V588H259V589H260V587H261V587H262V586H263V595H264V585H265V580H266V588H267V580H268V593H269V588H270V587H271V586H272V589H273V588H274V586H275V577H276V580H277V578H278V569H279V593H280V586H281V584H282V584H283V584H284V584H285V584H286V585H287V586H288V584H289V578H290V583H291V581H292V575H293V584H294V574H295V585H296V585H297V584H298V584H299V582H300V575H301V585H302V583H303V576H304V581H305V582H306V583H307V581H308V584H309V584H310V582H311V584H312V583H313V579H314V580H315V581H316V570H317V579H318V579H319V582H320V588H321V584H322V573H323V585H324V573H325V578H326V580H327V580H328V579H329V584H330V593H331V586H332V586H333V584H334V585H335V587H336V586H337V587H338V591H339V587H340V585H341V584H342V585H343V586H344V585H345V585H346V589H347V583H348V584H349V583H350V578H351V582H352V584H353V583H354V582H355V581H356V581H357V583H358V572H359V583H360V581H361V582H362V560H363V586H364V579H365V579H366V581H367V567H368V583H369V585H370V592H371V587H372V586H373V588H374V588H375V591H376V586H377V588H378V574H379V585H380V574H381V584H382V583H383V584H384V586H385V583H386V582H387V585H388V581H389V572H390V583H391V583H392V574H393V581H394V581H395V583H396V581H397V583H398V584H399V586H400V583H401V583H402V587H403V573H404V570H405V584H406V592H407V582H408V584H409V586H410V584H411V575H412V586H413V588H414V576H415V584H416V572H417V584H418V585H419V575H420V597H421V585H422V587H423V589H424V588H425V574H426V571H427V584H428V584H429V584H430V586H431V572H432V585H433V587H434V581H435V575H436V586H437V599H438V591H439V590H440V588H441V593H442V588H443V582H444V582H445V596H446V587H447V584H448V584H449V608H450V584H451V585H452V585H453V583H454V585H455V584H456V585H457V586H458V575H459V586H460V578H461V575H462V574H463V588H464V580H465V581H466V587H467V569H468V581H469V575H470V582H471V582H472V584H473V584H474V583H475V584H476V586H477V586H478V575H479V586H480V585H481V584H482V585H483V573H484V585H485V584H486V582H487V583H488V576H489V586H490V585H491V583H492V573H493V582H494V583H495V571H496V581H497V581H498V582H499V581H500V580H501V579H502V581H503V582H504V582H505V590H506V574H507V587H508V586H509V585H510V583H511V580H512V583H513V585H514V571H515V584H516V585H517V587H518V582H519V584H520V582H521V569H522V579H523V579H524V571H525V583H526V585H527V581H528V581H529V573H530V575H531V577H532V572H533V583H534V581H535V582H536V582H537V583H538V581H539V584H540V583H541V583H542V584H543V585H544V584H545V585H546V585H547V599H548V582H549V580H550V573H551V573H552V581H553V590H554V580H555V582H556V581H557V582H558V579H559V582H560V581H561V586H562V586H563V587H564V585H565V582H566V582H567V583H568V584H569V586H570V588H571V588H572V587H573V587H574V586H575V586H576V589H577V587H578V585H579V588H580V581H581V588H582V580H583V589H584V586H585V584H586V572H587V582H588V586H589V580H590V560H591V585H592V585H593V584H594V586H595V593H596V586H597V586H598V582H599V584H600V590H601V591H602V583H603V588H604V589H605V585H606V582H607V581H608V573H609V582H610V585H611V584H612V582H613V586H614V584H615V585H616V585H617V586H618V586H619V584H620V584H621V584H622V571H623V582H624V576H625V573H626V585H627V586H628V586H629V587H630V586H631V585H632V587H633V578H634V591H635V594H636V590H637V599H638V588H639V577H640V588H641V587H642V588H643V587H644V589H645V589H646V583H647V587H648V583H649V571H650V584H651V583H652V583H653V581H654V569H655V569H656V579H657V579H658V579H659V579H660V580H661V583H662V582H663V571H664V591H665V582H666V572H667V585H668V586H669V594H670V587H671V585H672V585H673V580H674V576H675V576H676V587H677V589H678V595H679V591H680V591H681V588H682V589H683V585H684V585H685V578H686V592H687V583H688V586H689V585H690V574H691V584H692V575H693V580H694V582H695V583H696V583H697V592H698V569H699V570H700V585H701V585H702V584H703V598H704V588H705V585H706V584H707V578H708V588H709V586H710V586H711V586H712V588H713V587H714V586H715V585H716V583H717V576H718V591H719V579H720V581H721V568H722V578H723V578H724V581H725V579H726V590H727V583H728V582H729V572H730V582H731V582H732V581H733V580H734V581H735V581H736V581H737V570H738V581H739V584H740V583H741V582H742V579H743V579H744V579H745V580H746V591H747V585H748V593H749V588H750V581H751V586H752V584H753V584H754V585H755V589H756V590H757V589H758V583H759V575H760V584H761V572H762V584H763V570H764V583H765V583H766V573H767V588H768V579H769V580H770V589H771V593H772V588H773V589H774V586H775V585H776V585H777V586H778V572H779V589H780V579H781V586H782V585H783V582H784V584H785V585H786V585H787V586H788V575H789V588H790V588H791V589H792V577H793V590H794V586H795V587H796V588H797V588H798V581H799V587H800V586H801V585H802V584H803V586H804V585H805V582H806V593H807V575H808V588H809V585H810V581H811V575H812V579H813V582H814V583H815V579H816V585H817V574H818V592H819V582H820V570H821V584H822V587H823V586H824V586H825V575H826V593H827V593H828V596H829V586H830V589H831V588H832V587H833V575H834V593H835V585H836V585H837V577H838V586H839V584H840V580H841V593H842V588H843V594H844V579H845V589H846V585H847V584H848V585H849V584H850V584H851V583H852V585H853V583H854V581H855V588H856V588H857V589H858V589H859V587H860V586H861V592H862V592H863V587H864V586H865V584H866V585H867V588H868V587H869V585H870V586H871V586H872V586H873V584H874V584H875V584H876V583H877V586H878V588H879V588H880V587H881V586H882V577H883V585H884V586H885V586H886V585H887V590H888V583H889V581H890V583H891V596H892V586H893V586H894V601H895V581H896V585H897V584H898V580H899V583H900V578H901V578H902V580H903V579H904V578H905V579H906V578H907V581H908V575H909V585H910V580H911V580H912V583H913V586H914V578H915V582H916V582H917V583H918V583H919V581H920V581H921V583H922V582H923V583H924V585H925V581H926V574H927V590H928V590H929V584H930V585H931V585H932V588H933V587H934V587H935V586H936V583H937V583H938V584H939V583H940V584H941V585H942V584H943V571H944V586H945V586H946V587H947V585H948V582H949V586H950V589H951V589H952V580H953V586H954V589H955V585H956V586H957V573H958V584H959V585H960V585H961V586H962V589H963V586H964V589H965V583H966V583H967V587H968V590H969V589H970V590H971V588H972V589H973V595H974V574H975V592H976V586H977V584H978V577H979V587H980V620H981V576H982V587H983V574H984V572H985V572H986V584H987V592H988V591H989V585H990V587H991V579H992V578H993V575H994V585H995V586H996V583H997V571H998V594H999V585H1000V586H1001V588H1002V589H1003V589H1004V587H1005V593H1006V584H1007V588H1008V586H1009V579H1010V583H1011V580H1012V590H1013V582H1014V588H1015V589H1016V589H1017V588H1018V585H1019V583H1020V584H1021V584H1022V583H1023V579H1024V569H1025V583H1026V584H1027V588H1028V587H1029V590H1030V590H1031V588H1032V590H1033V588H1034V573H1035V577H1036V592H1037V574H1038V593H1039V585H1040V584H1041V584H1042V569H1043V574H1044V581H1045V582H1046V580H1047V583H1048V569H1049V583H1050V580H1051V591H1052V583H1053V587H1054V586H1055V587H1056V589H1057V590H1058V589H1059V590H1060V590H1061V588H1062V588H1063V585H1064V585H1065V586H1066V586H1067V583H1068V609H1069V573H1070V585H1071V585H1072V584H1073V591H1074V582H1075V577H1076V582H1077V583H1078V583H1079V586H1080V580H1081V583H1082V584H1083V582H1084V580H1085V580H1086V581H1087V583H1088V585H1089V585H1090V585H1091V583H1092V585H1093V586H1094V585H1095V571H1096V584H1097V582H1098V585H1099V583H1100V581H1101V581H1102V583H1103V584H1104V587H1105V584H1106V588H1107V584H1108V586H1109V585H1110V587H1111V588H1112V588H1113V589H1114V589H1115V586H1116V585H1117V586H1118V585H1119V586H1120V574H1121V582H1122V582H1123V582H1124V582H1125V581H1126V585H1127V592H1128V584H1129V584H1130V584H1131V585H1132V586H1133V584H1134V582H1135V581H1136V582H1137V580H1138V582H1139V588H1140V582H1141V582H1142V582H1143V577H1144V587H1145V582H1146V576H1147V583H1148V592H1149V583H1150V587H1151V587H1152V592H1153V583H1154V586H1155V584H1156V583H1157V581H1158V583H1159V584H1160V582H1161V578H1162V580H1163V583H1164V569H1165V592H1166V594H1167V586H1168V587H1169V586H1170V583H1171V585H1172V584H1173V581H1174V584H1175V586H1176V584H1177V589H1178V583H1179V579H1180V581H1181V569H1182V581H1183V585H1184V569H1185V582H1186V577H1187V581H1188V577H1189V583H1190V584H1191V587H1192V584H1193V574H1194V583H1195V573H1196V572H1197V585H1198V575H1199V587H1200V587H1201V588H1202V587H1203V584H1204V582H1205V586H1206V588H1207V574H1208V588H1209V590H1210V587H1211V588H1212V586H1213V588H1214V589H1215V595H1216V585H1217V584H1218V583H1219V583H1220V584H1221V584H1222V585H1223V584H1224V575H1225V586H1226V585H1227V585H1228V584H1229V581H1230V575H1231V572H1232V592H1233V583H1234V574H1235V583H1236V581H1237V582H1238V582H1239V580H1240V580H1241V570H1242V579H1243V580H1244V569H1245V591H1246V571H1247V582H1248V576H1249V586H1250V589H1251V589H1252V587H1253V586H1254V578H1255V586H1256V589H1257V588H1258V575H1259V585H1260V587H1261V581H1262V590H1263V590H1264V578H1265V585H1266V583H1267V586H1268V586H1269V587H1270V587H1271V584H1272V581H1273V580H1274V581H1275V588H1276V591H1277V584H1278V579H1279V584H1280V581H1281V579H1282V579H1283V580H1284V580H1285V578H1286V583H1287V583H1288V582H1289V584H1290V583H1291V583H1292V582H1293V579H1294V582H1295V583H1296V583H1297V585H1298V584H1299V583H1300V584H1301V583H1302V584H1303V582H1304V582H1305V581H1306V584H1307V584H1308V585H1309V585H1310V585H1311V586H1312V589H1313V579H1314V593H1315V588H1316V624H1317V575H1318V589H1319V589H1320V588H1321V589H1322V590H1323V590H1324V590H1325V590H1326V580H1327V598H1328V590H1329V587H1330V586H1331V587H1332V587H1333V577H1334V582H1335V585H1336V584H1337V582H1338V590H1339V582H1340V582H1341V583H1342V580H1343V579H1344V583H1345V583H1346V583H1347V582H1348V587H1349V582H1350V583H1351V582H1352V584H1353V586H1354V587H1355V588H1356V585H1357V582H1358V582H1359V582H1360V582H1361V582H1362V580H1363V585H1364V573H1365V591H1366V584H1367V576H1368V580H1369V587H1370V579H1371V585H1372V583H1373V580H1374V581H1375V579H1376V584H1377V593H1378V576H1379V576H1380V582H1381V579H1382V585H1383V572H1384V579H1385V585H1386V586H1387V583H1388V581H1389V572H1390V580H1391V574H1392V583H1393V586H1394V585H1395V586H1396V588H1397V588H1398V589H1399V586H1400V586H1401V607H1402V585H1403V581H1404V573H1405V577H1406V575H1407V586H1408V585H1409V586H1410V586H1411V583H1412V570H1413V583H1414V589H1415V578H1416V587H1417V586H1418V585H1419V588H1420V588H1421V586H1422V584H1423V586H1424V586H1425V585H1426V588H1427V590H1428V577H1429V587H1430V587H1431V576H1432V586H1433V584H1434V585H1435V583H1436V583H1437V583H1438V585H1439V585H1440V586H1441V587H1442V586H1443V585H1444V589H1445V593H1446V633H1447V601H1448V593H1449V605H1450V612H1451V606H1452V596H1453V606H1454V607H1455V606H1456V619H1457V602H1458V614H1459V617H1460V619H1461V615H1462V625H1463V619H1464V617H1465V618H1466V618H1467V620H1468V622H1469V624H1470V624H1471V625H1472V628H1473V632H1474V633H1475V626H1476V621H1477V615H1478V617H1479V618H1480V611H1481V603H1482V592H1483V605H1484V606H1485V609H1486V605H1487V608H1488V598H1489V613H1490V607H1491V604H1492V613H1493V603H1494V604H1495V605H1496V612H1497V600H1498V602H1499V606H1500V608H1501V608H1502V610H1503V609H1504V606H1505V594H1506V604H1507V603H1508V597H1509V607H1510V607H1511V607H1512V608H1513V606H1514V606H1515V607H1516V609H1517V610H1518V610H1519V611H1520V611H1521V607H1522V612H1523V613H1524V604H1525V603H1526V607H1527V609H1528V606H1529V610H1530V611H1531V612H1532V611H1533V610H1534V600H1535V596H1536V571H1537V577H1538V578H1539V578H1540V569H1541V563H1542V577H1543V577H1544V579H1545V570H1546V580H1547V582H1548V580H1549V580H1550V580H1551V582H1552V581H1553V579H1554V577H1555V578H1556V578H1557V577H1558V576H1559V571H1560V578H1561V577H1562V563H1563V576H1564V579H1565V581H1566V579H1567V589H1568V580H1569V581H1570V572H1571V572H1572V582H1573V581H1574V582H1575V578H1576V581H1577V580H1578V592H1579V584H1580V583H1581V581H1582V579H1583V579H1584V583H1585V585H1586V574H1587V587H1588V588H1589V590H1590V577H1591V589H1592V589H1593V590H1594V590H1595V589H1596V591H1597V584H1598V590H1599V591H1600V590H1601V590H1602V591H1603V592H1604V577H1605V578H1606V592H1607V591H1608V593H1609V587H1610V579H1611V576H1612V585H1613V585H1614V586H1615V585H1616V585H1617V587H1618V588H1619V588H1620V588H1621V649Z" fill="#cdcdcd"/></svg><svg width="16" height="14" style="position:absolute;left:708px;top:263px"><rect x="0.75" y="0.75" width="14.5" height="12.5" fill="#1ba31c" stroke="#a8a8a8" stroke-width="1.5"/><path d="M8.8 2.8Q6.6 2.2 6.1 4.2L3.2 12.6M3.4 5.6H8.4M7 10.9L12.2 5.2M8.6 5.9Q10.2 8 11.3 10.8" stroke="#1a1a1a" stroke-width="1.1" fill="none" stroke-linecap="round"/></svg><svg width="16" height="14" style="position:absolute;left:82px;top:446px"><rect x="0.75" y="0.75" width="14.5" height="12.5" fill="#fccb00" stroke="#a8a8a8" stroke-width="1.5"/><path d="M8.8 2.8Q6.6 2.2 6.1 4.2L3.2 12.6M3.4 5.6H8.4M7 10.9L12.2 5.2M8.6 5.9Q10.2 8 11.3 10.8" stroke="#1a1a1a" stroke-width="1.1" fill="none" stroke-linecap="round"/></svg><div class="lab" style="left:73px;top:329px;width:15px;height:16px;background:#394d66">G</div><div class="lab" style="left:73px;top:419px;width:15px;height:17px;background:#394d66">D</div><div class="lab" style="left:698px;top:329px;width:15px;height:16px;background:#394d66">G</div><div class="lab" style="left:698px;top:419px;width:15px;height:17px;background:#394d66">D</div><div class="lab" style="left:73px;top:525px;width:15px;height:17px;background:#666">G</div><div class="lab" style="left:73px;top:632px;width:15px;height:17px;background:#666">D</div><svg width="1621" height="864" style="position:absolute;left:0;top:0"><path d="M72 327.5H694" stroke="#e8e8e8" stroke-width="1"/><path d="M72 328.5H694" stroke="#111" stroke-width="1"/><path d="M697 328.2H730.6 C732.1 328.3 736.9 327.9 739.8 328.8 C742.7 329.7 745.2 331.8 748.2 333.5 C751.2 335.2 754.6 336.7 758.1 339.2 C761.6 341.7 765.9 345.1 769.4 348.4 C772.9 351.7 776.0 355.6 779.3 359 C782.6 362.4 785.4 365.0 789.2 368.8 C793.0 372.6 797.4 377.1 801.9 381.6 C806.4 386.1 811.3 390.8 816 395.7 C820.7 400.6 826.2 407.2 830.2 411.2 C834.2 415.2 836.7 417.2 840 419.7 C843.3 422.2 846.9 424.4 850 426 C853.1 427.6 855.6 428.9 858.4 429.6 C861.2 430.3 865.5 430.1 866.9 430.2H1047" stroke="#111" stroke-width="1.5" fill="none" transform="translate(0,0.6)"/><path d="M697 328.2H730.6 C732.1 328.3 736.9 327.9 739.8 328.8 C742.7 329.7 745.2 331.8 748.2 333.5 C751.2 335.2 754.6 336.7 758.1 339.2 C761.6 341.7 765.9 345.1 769.4 348.4 C772.9 351.7 776.0 355.6 779.3 359 C782.6 362.4 785.4 365.0 789.2 368.8 C793.0 372.6 797.4 377.1 801.9 381.6 C806.4 386.1 811.3 390.8 816 395.7 C820.7 400.6 826.2 407.2 830.2 411.2 C834.2 415.2 836.7 417.2 840 419.7 C843.3 422.2 846.9 424.4 850 426 C853.1 427.6 855.6 428.9 858.4 429.6 C861.2 430.3 865.5 430.1 866.9 430.2H1047" stroke="#e8e8e8" stroke-width="1.0" fill="none" transform="translate(0,-0.4)"/><path d="M730.5 323.5L734.5 326.7V330.3L730.5 333.5L726.5 330.3V326.7Z" fill="#c8c8c8" stroke="#111" stroke-width="1.6"/><path d="M867 425.5L871 428.7V432.3L867 435.5L863 432.3V428.7Z" fill="#c8c8c8" stroke="#111" stroke-width="1.6"/><path d="M1042.5 260H1048V265.5Z" fill="#d8d8d8"/><path d="M1041.5 260L1048 266.5" stroke="#151515" stroke-width="1"/><path d="M72 644.5H615" stroke="#111" stroke-width="1.5"/><path d="M72 643H615" stroke="#f0f0f0" stroke-width="1"/><path d="M615 640 C615.7 638.2 617.0 632.6 619 629.3 C621.0 626.0 623.4 623.2 627.2 620 C631.0 616.8 636.4 613.2 642 609.8 C647.6 606.4 654.4 602.5 660.6 599.6 C666.8 596.7 672.8 594.4 679 592.2 C685.2 590.1 691.4 588.6 697.6 586.7 C703.8 584.8 708.3 583.0 716 581 C723.7 579.0 725.2 578.7 744 574.6 C762.8 570.5 799.8 562.4 828.8 556.6 C857.8 550.8 888.1 544.6 917.7 540 C947.3 535.4 979.1 532.1 1006.5 528.9 C1033.9 525.6 1069.4 521.9 1082 520.5 H1621" stroke="#151515" stroke-width="1.0" fill="none" transform="translate(0.3,0.5)"/><path d="M615 640 C615.7 638.2 617.0 632.6 619 629.3 C621.0 626.0 623.4 623.2 627.2 620 C631.0 616.8 636.4 613.2 642 609.8 C647.6 606.4 654.4 602.5 660.6 599.6 C666.8 596.7 672.8 594.4 679 592.2 C685.2 590.1 691.4 588.6 697.6 586.7 C703.8 584.8 708.3 583.0 716 581 C723.7 579.0 725.2 578.7 744 574.6 C762.8 570.5 799.8 562.4 828.8 556.6 C857.8 550.8 888.1 544.6 917.7 540 C947.3 535.4 979.1 532.1 1006.5 528.9 C1033.9 525.6 1069.4 521.9 1082 520.5 H1621" stroke="#f2f2f2" stroke-width="0.8" fill="none" transform="translate(-0.3,-0.6)"/><path d="M615.5 639.5L619.5 642.7V646.3L615.5 649.5L611.5 646.3V642.7Z" fill="#3b8ee6" stroke="#111" stroke-width="1.6"/><path d="M1082.5 516L1086.5 519.2V522.8L1082.5 526L1078.5 522.8V519.2Z" fill="#c8c8c8" stroke="#111" stroke-width="1.6"/><rect x="72" y="686" width="1549" height="2" fill="#8c8c8c"/></svg><div style="left:-1px;top:265px;width:23px;height:16px;border:1px solid #0c0c0c;box-sizing:border-box;background:#1f1f1f"></div><div style="left:9px;top:265px;width:1px;height:16px;background:#0c0c0c;"></div><div style="left:10px;top:272px;width:11px;height:1px;background:#0c0c0c;"></div><div style="left:-1px;top:446px;width:23px;height:16px;border:1px solid #0c0c0c;box-sizing:border-box;background:#1f1f1f"></div><div style="left:9px;top:446px;width:1px;height:16px;background:#0c0c0c;"></div><div style="left:10px;top:453px;width:11px;height:1px;background:#0c0c0c;"></div><span class="zero" style="left:-4px;top:328px">0</span><span class="zero" style="left:-4px;top:510px">0</span><svg width="17" height="14" style="position:absolute;left:44px;top:658px"><path d="M1 0.3Q5 4.5 8 4.5V9Q5 9 1 13Z M16 0.3Q12 4.5 9 4.5V9Q12 9 16 13Z" fill="#bdbdbd"/></svg><div style="left:618px;top:644px;width:198px;height:211px;background:#f2f2f2;border:1px solid #b9b9b9;box-sizing:border-box;box-shadow:2px 2px 3px rgba(0,0,0,0.35)"><div style="left:2px;top:1px;width:192px;height:24px;background:#91c9f7"></div><div style="left:2px;top:1px;width:24px;height:24px;background:#5aaff5"></div><svg width="14" height="10" style="position:absolute;left:7px;top:8px"><path d="M1 5L4.5 8.5L12.5 1" stroke="#2b2b2b" stroke-width="1.6" fill="none"/></svg><span class="mi" style="left:36px;top:6px">Linéaire</span><span class="mi" style="left:36px;top:30px">Bézier</span><span class="mi" style="left:36px;top:54px">Bézier auto</span><span class="mi" style="left:36px;top:78px">Bézier continue</span><span class="mi" style="left:36px;top:102px">Par paliers</span><span class="mi" style="left:36px;top:133px">Progressif</span><span class="mi" style="left:36px;top:157px">Dégressif</span><span class="mi" style="left:36px;top:188px">Supprimer</span><div style="left:32px;top:124px;width:162px;height:1px;background:#d0d0d0"></div><div style="left:32px;top:179px;width:162px;height:1px;background:#d0d0d0"></div></div>
</body></html>
